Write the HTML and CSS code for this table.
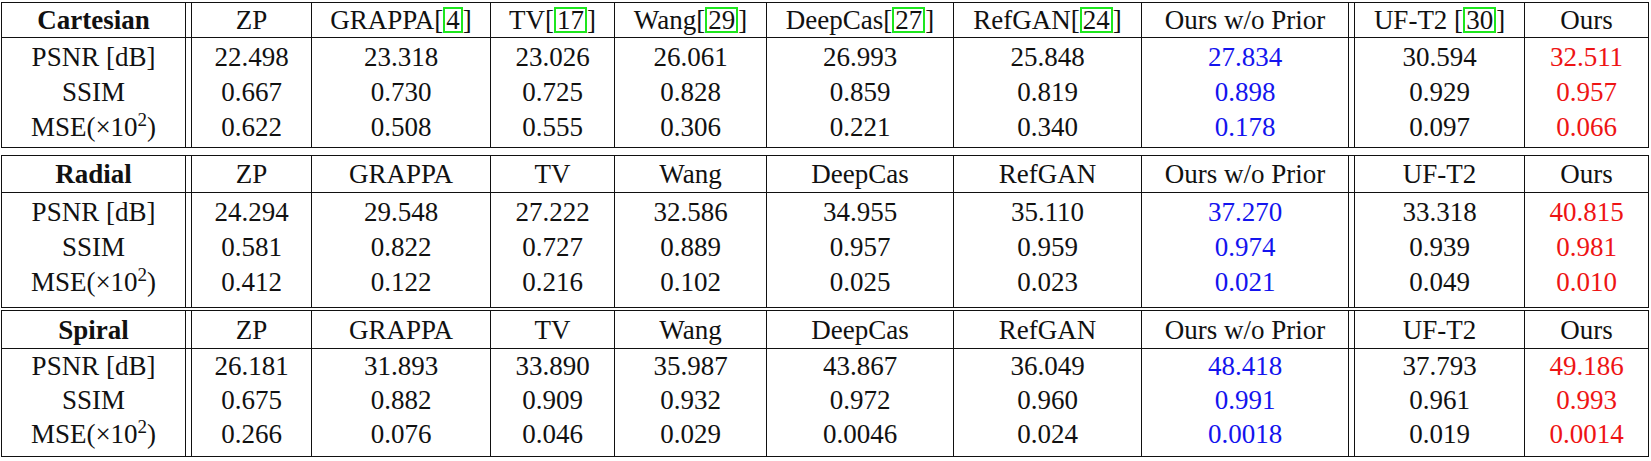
FILE: index.html
```html
<!DOCTYPE html>
<html lang="en">
<head>
  <meta charset="UTF-8" />
  <title>Reconstruction results</title>
  <link rel="stylesheet" href="styles.css">
</head>
<body>
  <div class="page">
    <table class="results cartesian">
      <thead>
        <tr>
          <th class="label w-label"><b>Cartesian</b></th>
          <th class="gap w-gap"></th>
          <th class="w-zp">ZP</th>
          <th class="w-grappa">GRAPPA[<span class="cite">4</span>]</th>
          <th class="w-tv">TV[<span class="cite">17</span>]</th>
          <th class="w-wang">Wang[<span class="cite">29</span>]</th>
          <th class="w-deep">DeepCas[<span class="cite">27</span>]</th>
          <th class="w-ref">RefGAN[<span class="cite">24</span>]</th>
          <th class="w-wo">Ours w/o Prior</th>
          <th class="gap w-gap"></th>
          <th class="w-uf">UF-T2 [<span class="cite">30</span>]</th>
          <th class="w-ours">Ours</th>
        </tr>
      </thead>
      <tbody>
        <tr class="first">
          <td class="label">PSNR [dB]</td><td class="gap"></td>
          <td>22.498</td><td>23.318</td><td>23.026</td><td>26.061</td><td>26.993</td><td>25.848</td>
          <td class="blue">27.834</td><td class="gap"></td><td>30.594</td><td class="red">32.511</td>
        </tr>
        <tr>
          <td class="label">SSIM</td><td class="gap"></td>
          <td>0.667</td><td>0.730</td><td>0.725</td><td>0.828</td><td>0.859</td><td>0.819</td>
          <td class="blue">0.898</td><td class="gap"></td><td>0.929</td><td class="red">0.957</td>
        </tr>
        <tr class="last">
          <td class="label">MSE(×10<sup>2</sup>)</td><td class="gap"></td>
          <td>0.622</td><td>0.508</td><td>0.555</td><td>0.306</td><td>0.221</td><td>0.340</td>
          <td class="blue">0.178</td><td class="gap"></td><td>0.097</td><td class="red">0.066</td>
        </tr>
      </tbody>
    </table>

    <table class="results radial">
      <thead>
        <tr>
          <th class="label w-label"><b>Radial</b></th>
          <th class="gap w-gap"></th>
          <th class="w-zp">ZP</th>
          <th class="w-grappa">GRAPPA</th>
          <th class="w-tv">TV</th>
          <th class="w-wang">Wang</th>
          <th class="w-deep">DeepCas</th>
          <th class="w-ref">RefGAN</th>
          <th class="w-wo">Ours w/o Prior</th>
          <th class="gap w-gap"></th>
          <th class="w-uf">UF-T2</th>
          <th class="w-ours">Ours</th>
        </tr>
      </thead>
      <tbody>
        <tr class="first">
          <td class="label">PSNR [dB]</td><td class="gap"></td>
          <td>24.294</td><td>29.548</td><td>27.222</td><td>32.586</td><td>34.955</td><td>35.110</td>
          <td class="blue">37.270</td><td class="gap"></td><td>33.318</td><td class="red">40.815</td>
        </tr>
        <tr>
          <td class="label">SSIM</td><td class="gap"></td>
          <td>0.581</td><td>0.822</td><td>0.727</td><td>0.889</td><td>0.957</td><td>0.959</td>
          <td class="blue">0.974</td><td class="gap"></td><td>0.939</td><td class="red">0.981</td>
        </tr>
        <tr class="last">
          <td class="label">MSE(×10<sup>2</sup>)</td><td class="gap"></td>
          <td>0.412</td><td>0.122</td><td>0.216</td><td>0.102</td><td>0.025</td><td>0.023</td>
          <td class="blue">0.021</td><td class="gap"></td><td>0.049</td><td class="red">0.010</td>
        </tr>
      </tbody>
    </table>

    <table class="results spiral">
      <thead>
        <tr>
          <th class="label w-label"><b>Spiral</b></th>
          <th class="gap w-gap"></th>
          <th class="w-zp">ZP</th>
          <th class="w-grappa">GRAPPA</th>
          <th class="w-tv">TV</th>
          <th class="w-wang">Wang</th>
          <th class="w-deep">DeepCas</th>
          <th class="w-ref">RefGAN</th>
          <th class="w-wo">Ours w/o Prior</th>
          <th class="gap w-gap"></th>
          <th class="w-uf">UF-T2</th>
          <th class="w-ours">Ours</th>
        </tr>
      </thead>
      <tbody>
        <tr class="first">
          <td class="label">PSNR [dB]</td><td class="gap"></td>
          <td>26.181</td><td>31.893</td><td>33.890</td><td>35.987</td><td>43.867</td><td>36.049</td>
          <td class="blue">48.418</td><td class="gap"></td><td>37.793</td><td class="red">49.186</td>
        </tr>
        <tr>
          <td class="label">SSIM</td><td class="gap"></td>
          <td>0.675</td><td>0.882</td><td>0.909</td><td>0.932</td><td>0.972</td><td>0.960</td>
          <td class="blue">0.991</td><td class="gap"></td><td>0.961</td><td class="red">0.993</td>
        </tr>
        <tr class="last">
          <td class="label">MSE(×10<sup>2</sup>)</td><td class="gap"></td>
          <td>0.266</td><td>0.076</td><td>0.046</td><td>0.029</td><td>0.0046</td><td>0.024</td>
          <td class="blue">0.0018</td><td class="gap"></td><td>0.019</td><td class="red">0.0014</td>
        </tr>
      </tbody>
    </table>
  </div>
</body>
</html>
```

FILE: styles.css
```css
body {
  margin: 0;
  padding: 0;
  background: #ffffff;
  font-family: 'Liberation Serif', 'Times New Roman', serif;
  color: #111;
}

.page {
  padding: 2px 0 0 1px;
}

.results {
  table-layout: fixed;
  border-collapse: separate;
  border-spacing: 0;
  width: 1648px;
  font-size: 27px;
}

.results th,
.results td {
  box-sizing: border-box;
  padding: 0;
  text-align: center;
  font-weight: normal;
  white-space: nowrap;
  border-right: 1px solid #111;
  line-height: 35px;
  height: 35px;
}

.results th {
  border-top: 1px solid #111;
  border-bottom: 1px solid #111;
}

.results th:first-child,
.results td:first-child {
  border-left: 1px solid #111;
}

.results tr.last td {
  border-bottom: 1px solid #111;
}

/* column widths, right border included */
.w-label { width: 185px; }
.w-gap { width: 6px; }
.w-zp { width: 120px; }
.w-grappa { width: 179px; }
.w-tv { width: 124px; }
.w-wang { width: 152px; }
.w-deep { width: 187px; }
.w-ref { width: 188px; }
.w-wo { width: 207px; }
.w-uf { width: 170px; }
.w-ours { width: 124px; }

.results th b {
  font-weight: bold;
}

.results sup {
  font-size: 19px;
  line-height: 0;
  vertical-align: 10px;
}

.cite {
  display: inline-block;
  border: 2px solid #1ee61e;
  padding: 0 1px;
  line-height: 22px;
}

.blue { color: #1414ee; }
.red { color: #ee1414; }

/* row spacing per block */
.cartesian th { height: 36px; line-height: 32px; }
.cartesian tr.first td { padding-top: 2px; height: 37px; }
.cartesian tr.last td { padding-bottom: 2px; height: 38px; }

.radial { margin-top: 7px; }
.radial th { height: 38px; line-height: 35px; }
.radial tr.first td { padding-top: 2px; height: 37px; }
.radial tr.last td { padding-bottom: 7px; height: 43px; }

.spiral { margin-top: 2px; }
.spiral th { height: 39px; line-height: 36px; }
.spiral tr.first td { height: 34px; line-height: 34px; }
.spiral tr td { height: 34px; line-height: 34px; }
.spiral tr.last td { padding-bottom: 5px; height: 40px; }
```
